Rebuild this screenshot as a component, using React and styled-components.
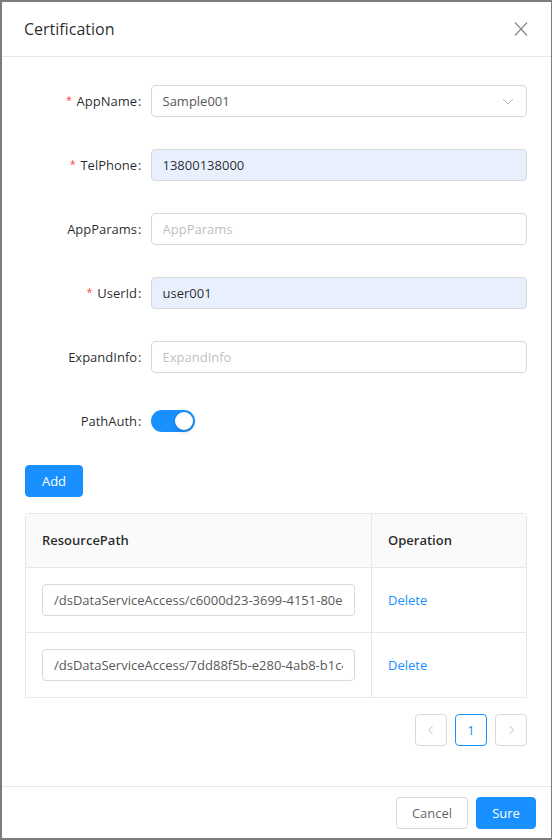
import React from 'react';
import styled, { createGlobalStyle } from 'styled-components';

const GlobalStyle = createGlobalStyle`
  html, body {
    margin: 0;
    padding: 0;
    background: #7d7d7d;
  }
  body {
    font-family: "Open Sans", "Liberation Sans", sans-serif;
    font-size: 13px;
    color: rgba(0, 0, 0, 0.85);
  }
  * {
    box-sizing: border-box;
  }
`;

const Modal = styled.div`
  margin: 2px 0 0 2px;
  width: 549px;
  height: 836px;
  background: #fff;
  display: flex;
  flex-direction: column;
`;

const Header = styled.div`
  display: flex;
  align-items: center;
  justify-content: space-between;
  padding: 16px 22px 16px 22px;
  border-bottom: 1px solid #e8e8e8;
`;

const Title = styled.div`
  font-size: 16px;
  line-height: 22px;
  font-weight: 500;
  color: rgba(0, 0, 0, 0.85);
`;

const CloseBtn = styled.button`
  border: none;
  background: none;
  padding: 0;
  width: 16px;
  height: 16px;
  display: flex;
  cursor: pointer;
`;

const Body = styled.div`
  flex: 1;
  padding: 28px 24px 24px 23px;
`;

const FormItem = styled.div`
  display: grid;
  grid-template-columns: 125.5px 1fr;
  align-items: center;
  height: 32px;
  margin-bottom: ${(p) => p.$gap || 32}px;
`;

const Label = styled.label`
  justify-self: end;
  font-size: 13px;
  color: rgba(0, 0, 0, 0.85);
  white-space: nowrap;

  &::before {
    content: ${(p) => (p.$required ? '"*"' : 'none')};
    color: #ff4d4f;
    margin-right: 5px;
    font-family: "Liberation Sans", sans-serif;
    font-size: 14px;
  }

  &::after {
    content: ':';
    margin: 0 9px 0 1px;
  }
`;

const Input = styled.input`
  width: 100%;
  height: 32px;
  padding: 4px 11px;
  font-family: inherit;
  font-size: 13px;
  color: ${(p) => (p.$muted ? '#595959' : 'rgba(0, 0, 0, 0.85)')};
  background: ${(p) => (p.$filled ? '#e8f0fe' : '#fff')};
  border: 1px solid #d9d9d9;
  border-radius: 4px;
  outline: none;

  &::placeholder {
    color: #bfbfbf;
  }
`;

const Select = styled.div`
  height: 32px;
  padding: 0 12px 0 11px;
  display: flex;
  align-items: center;
  justify-content: space-between;
  border: 1px solid #d9d9d9;
  border-radius: 4px;
  color: #595959;
`;

const Switch = styled.button`
  position: relative;
  display: block;
  width: 44px;
  height: 22px;
  border: none;
  border-radius: 11px;
  background: #1890ff;
  padding: 0;
  cursor: pointer;

  &::after {
    content: '';
    position: absolute;
    top: 2px;
    right: 2px;
    width: 18px;
    height: 18px;
    border-radius: 50%;
    background: #fff;
    box-shadow: 0 2px 4px rgba(0, 35, 11, 0.2);
  }
`;

const Button = styled.button`
  height: 32px;
  padding: 0 ${(p) => (p.$primary ? 15 : 14)}px;
  font-family: inherit;
  font-size: 13px;
  border-radius: 4px;
  cursor: pointer;
  border: 1px solid ${(p) => (p.$primary ? '#1890ff' : '#d9d9d9')};
  background: ${(p) => (p.$primary ? '#1890ff' : '#fff')};
  color: ${(p) => (p.$primary ? '#fff' : 'rgba(0, 0, 0, 0.65)')};
`;

const AddButton = styled(Button)`
  display: block;
  width: 58px;
  margin: 0 0 16px;
  font-weight: 500;
`;

const FooterButton = styled(Button)`
  min-width: ${(p) => (p.$primary ? 60 : 72)}px;
`;

const Table = styled.table`
  width: 100%;
  border-collapse: separate;
  border-spacing: 0;
  border: 1px solid #e8e8e8;
  border-radius: 4px 4px 0 0;
  table-layout: fixed;
`;

const Th = styled.th`
  text-align: left;
  font-weight: 600;
  background: #fafafa;
  color: rgba(0, 0, 0, 0.85);
  padding: 16px;
  line-height: 21px;
  border-bottom: 1px solid #e8e8e8;
  border-right: ${(p) => (p.$last ? 'none' : '1px solid #e8e8e8')};
`;

const Td = styled.td`
  padding: 16px;
  border-bottom: ${(p) => (p.$lastRow ? 'none' : '1px solid #e8e8e8')};
  border-right: ${(p) => (p.$last ? 'none' : '1px solid #e8e8e8')};
`;

const LinkBtn = styled.a`
  color: #1890ff;
  text-decoration: none;
  cursor: pointer;
`;

const Pager = styled.ul`
  list-style: none;
  display: flex;
  justify-content: flex-end;
  gap: 8px;
  margin: 16px 0 0;
  padding: 0;
`;

const PageItem = styled.li`
  width: 32px;
  height: 32px;
  display: flex;
  align-items: center;
  justify-content: center;
  border: 1px solid ${(p) => (p.$active ? '#1890ff' : '#d9d9d9')};
  border-radius: 4px;
  color: ${(p) => (p.$active ? '#1890ff' : '#bfbfbf')};
  font-size: 13px;
`;

const Footer = styled.div`
  display: flex;
  justify-content: flex-end;
  gap: 8px;
  padding: 10px 15px 9px;
  border-top: 1px solid #e8e8e8;
`;

const Chevron = ({ dir }) => {
  const d = {
    down: 'M1 4 L6 9 L11 4',
    left: 'M7.5 2 L3.5 6 L7.5 10',
    right: 'M4.5 2 L8.5 6 L4.5 10',
  }[dir];
  return (
    <svg width="12" height="12" viewBox="0 0 12 12" fill="none">
      <path d={d} stroke="#bfbfbf" strokeWidth="1" />
    </svg>
  );
};

const resources = [
  '/dsDataServiceAccess/c6000d23-3699-4151-80e2-5d1f7a9b3c40',
  '/dsDataServiceAccess/7dd88f5b-e280-4ab8-b1c4-0f2e6a7d9e13',
];

export default function App() {
  return (
    <>
      <GlobalStyle />
      <Modal>
        <Header>
          <Title>Certification</Title>
          <CloseBtn aria-label="close">
            <svg width="16" height="16" viewBox="0 0 16 16">
              <path d="M2 1.5 L14 14.5 M14 1.5 L2 14.5" stroke="rgba(0,0,0,0.45)" strokeWidth="1.3" />
            </svg>
          </CloseBtn>
        </Header>
        <Body>
          <FormItem>
            <Label $required>AppName</Label>
            <Select>
              <span>Sample001</span>
              <Chevron dir="down" />
            </Select>
          </FormItem>
          <FormItem>
            <Label $required>TelPhone</Label>
            <Input $filled defaultValue="13800138000" />
          </FormItem>
          <FormItem>
            <Label>AppParams</Label>
            <Input placeholder="AppParams" />
          </FormItem>
          <FormItem>
            <Label $required>UserId</Label>
            <Input $filled defaultValue="user001" />
          </FormItem>
          <FormItem>
            <Label>ExpandInfo</Label>
            <Input placeholder="ExpandInfo" />
          </FormItem>
          <FormItem $gap={28}>
            <Label>PathAuth</Label>
            <div>
              <Switch aria-label="PathAuth" />
            </div>
          </FormItem>

          <AddButton $primary>Add</AddButton>

          <Table>
            <colgroup>
              <col style={{ width: '346px' }} />
              <col />
            </colgroup>
            <thead>
              <tr>
                <Th>ResourcePath</Th>
                <Th $last>Operation</Th>
              </tr>
            </thead>
            <tbody>
              {resources.map((path, i) => (
                <tr key={path}>
                  <Td $lastRow={i === resources.length - 1}>
                    <Input $muted defaultValue={path} />
                  </Td>
                  <Td $last $lastRow={i === resources.length - 1}>
                    <LinkBtn>Delete</LinkBtn>
                  </Td>
                </tr>
              ))}
            </tbody>
          </Table>

          <Pager>
            <PageItem>
              <Chevron dir="left" />
            </PageItem>
            <PageItem $active>1</PageItem>
            <PageItem>
              <Chevron dir="right" />
            </PageItem>
          </Pager>
        </Body>
        <Footer>
          <FooterButton>Cancel</FooterButton>
          <FooterButton $primary>Sure</FooterButton>
        </Footer>
      </Modal>
    </>
  );
}
